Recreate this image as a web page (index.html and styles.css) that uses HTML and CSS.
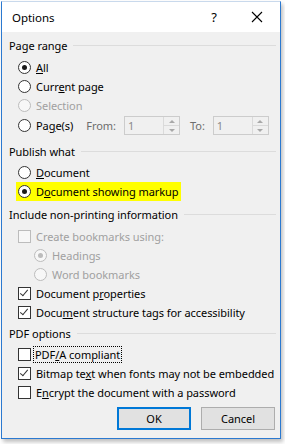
FILE: index.html
```html
<!DOCTYPE html>
<html>
<head>
<meta charset="utf-8">
<link rel="stylesheet" href="styles.css">
</head>
<body>
<div class="win">
  <div class="titlebar">
    <span class="title">Options</span>
    <span class="help">?</span>
    <svg class="close" width="12" height="12" viewBox="0 0 12 12"><path d="M1 1L11 11M11 1L1 11" stroke="#000" stroke-width="1.1" fill="none"/></svg>
  </div>
  <div class="content">
    <div class="ghead g1"><span>Page range</span><i class="rule"></i></div>
    <div class="row first"><span class="radio on"></span><span class="lbl"><u>A</u>ll</span></div>
    <div class="row"><span class="radio"></span><span class="lbl">Curr<u>e</u>nt page</span></div>
    <div class="row dis"><span class="radio"></span><span class="lbl">Selection</span></div>
    <div class="row pages"><span class="radio"></span><span class="lbl">Pa<u>g</u>e(s)</span>
      <span class="flbl from">From:</span>
      <span class="spin"><span class="val">1</span><span class="arrows"><span class="up"></span><span class="dn"></span></span></span>
      <span class="flbl to">To:</span>
      <span class="spin"><span class="val">1</span><span class="arrows"><span class="up"></span><span class="dn"></span></span></span>
    </div>

    <div class="ghead g2"><span>Publish what</span><i class="rule"></i></div>
    <div class="row first"><span class="radio"></span><span class="lbl"><u>D</u>ocument</span></div>
    <div class="row"><span class="hl"><span class="radio on"></span><span class="lbl">D<u>o</u>cument showing markup</span></span></div>

    <div class="ghead g3"><span>Include non-printing information</span><i class="rule"></i></div>
    <div class="row first dis"><span class="check"></span><span class="lbl">Create bookmarks using:</span></div>
    <div class="row dis sub"><span class="radio on"></span><span class="lbl">Headings</span></div>
    <div class="row dis sub"><span class="radio"></span><span class="lbl">Word bookmarks</span></div>
    <div class="row"><span class="check on"></span><span class="lbl">Document p<u>r</u>operties</span></div>
    <div class="row"><span class="check on"></span><span class="lbl">Docu<u>m</u>ent structure tags for accessibility</span></div>

    <div class="ghead g4"><span>PDF options</span><i class="rule"></i></div>
    <div class="row first"><span class="check"></span><span class="lbl focus">PDF<u>/</u>A compliant</span></div>
    <div class="row"><span class="check on"></span><span class="lbl">Bitmap te<u>x</u>t when fonts may not be embedded</span></div>
    <div class="row"><span class="check"></span><span class="lbl">E<u>n</u>crypt the document with a password</span></div>

    <div class="buttons">
      <span class="btn def">OK</span>
      <span class="btn">Cancel</span>
    </div>
  </div>
</div>
</body>
</html>
```
FILE: styles.css
```css
html, body {
  margin: 0;
  padding: 0;
  background: #ffffff;
}
body {
  width: 285px;
  height: 444px;
  overflow: hidden;
  font-family: "Noto Sans", "Open Sans", sans-serif;
  font-size: 11px;
  letter-spacing: -0.05px;
  color: #000;
}
.win {
  margin: 1px 0 0 1px;
  width: 278px;
  height: 436px;
  border: 1px solid #2b79d0;
  border-top-color: #c9d9ec;
  background: #f0f0f0;
  box-shadow: 2px 3px 4px rgba(0,0,0,0.25);
  display: flex;
  flex-direction: column;
}
.titlebar {
  height: 30px;
  background: #fff;
  display: flex;
  align-items: center;
  flex-shrink: 0;
}
.title {
  margin-left: 10px;
  font-size: 11.5px;
  flex: 1;
}
.help {
  width: 12px;
  margin-right: 31px;
  font-size: 13px;
  text-align: center;
}
.close {
  margin-right: 17px;
}
.content {
  padding: 5px 0 0 7px;
  display: flex;
  flex-direction: column;
}
.ghead {
  height: 16px;
  display: flex;
  align-items: center;
  gap: 6px;
  margin-right: 4px;
}
.ghead .rule {
  flex: 1;
  height: 1px;
  background: #dcdcdc;
}
.g2 { margin-top: 7px; }
.g3 { margin-top: 5px; }
.g4 { margin-top: 3px; }
.row {
  height: 19px;
  display: flex;
  align-items: center;
  padding-left: 9px;
  white-space: nowrap;
}
.row.first { margin-top: 5px; }
.g2 + .row.first, .g4 + .row.first { margin-top: 4px; }
.row.sub { padding-left: 25px; }
.row.pages { height: 21px; }
.lbl {
  margin-left: 5px;
}
.dis .lbl { color: #a0a0a0; }
.radio {
  width: 11px;
  height: 11px;
  border: 1px solid #333;
  border-radius: 50%;
  background: #fff;
  display: flex;
  align-items: center;
  justify-content: center;
  flex-shrink: 0;
}
.radio.on::after {
  content: "";
  width: 5px;
  height: 5px;
  border-radius: 50%;
  background: #1a1a1a;
}
.dis .radio {
  border-color: #bcbcbc;
  background: #f7f7f7;
}
.dis .radio.on::after { background: #bcbcbc; }
.check {
  width: 11px;
  height: 11px;
  border: 1px solid #333;
  background: #fff;
  position: relative;
  flex-shrink: 0;
}
.check.on::after {
  content: "";
  position: absolute;
  left: 3px;
  top: 0px;
  width: 3px;
  height: 7px;
  border-right: 1px solid #333;
  border-bottom: 1px solid #333;
  transform: rotate(40deg);
}
.dis .check {
  border-color: #bcbcbc;
  background: #f7f7f7;
}
.hl {
  display: flex;
  align-items: center;
  background: #ffff00;
  margin-left: -2px;
  padding: 0 2px 0 2px;
  height: 19px;
}
.focus {
  outline: 1px dotted #000;
  outline-offset: 0;
  padding: 0 1px;
  margin-left: 3px;
}
.flbl {
  color: #6d6d6d;
}
.from { margin-left: 13px; }
.to { margin-left: 10px; }
.spin {
  margin-left: 8px;
  width: 56px;
  height: 19px;
  box-sizing: border-box;
  border: 1px solid #cccccc;
  background: #f0f0f0;
  display: flex;
}
.spin .val {
  flex: 1;
  color: #8a8a8a;
  padding-left: 3px;
  line-height: 17px;
}
.arrows {
  width: 15px;
  display: flex;
  flex-direction: column;
  border-left: 1px solid #dadada;
}
.arrows span {
  flex: 1;
  display: flex;
  align-items: center;
  justify-content: center;
}
.arrows .up { border-bottom: 1px solid #dadada; }
.arrows .up::after {
  content: "";
  border-left: 3px solid transparent;
  border-right: 3px solid transparent;
  border-bottom: 3px solid #a8a8a8;
}
.arrows .dn::after {
  content: "";
  border-left: 3px solid transparent;
  border-right: 3px solid transparent;
  border-top: 3px solid #a8a8a8;
}
.buttons {
  margin-top: 5px;
  display: flex;
  justify-content: flex-end;
  gap: 10px;
  padding-right: 5px;
}
.btn {
  width: 74px;
  height: 23px;
  box-sizing: border-box;
  border: 1px solid #adadad;
  background: #e1e1e1;
  display: flex;
  align-items: center;
  justify-content: center;
}
.btn.def {
  border: 2px solid #0078d7;
}
```
